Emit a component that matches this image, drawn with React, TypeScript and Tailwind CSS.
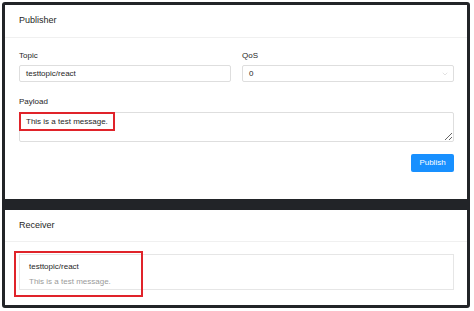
import { ChevronDown } from 'lucide-react';

const font = { fontFamily: '"Liberation Sans", Arial, sans-serif' };

const App = () => {
    return (
        <div className="relative w-[474px] h-[311px] bg-white text-[#262626]" style={font}>
            <div className="absolute left-[2px] top-[2px] w-[468px] h-[306px] border-[3px] border-[#222428] bg-[#222428] rounded-[3px] flex flex-col gap-[11px]">
                {/* Publisher */}
                <div className="h-[194px] bg-white flex flex-col">
                    <div className="h-[33px] flex items-center px-[14px] border-b border-[#f0f0f0] text-[9px] font-medium text-[#262626]">
                        Publisher
                    </div>
                    <div className="pl-[14px] pr-[13px] pt-[12px] flex flex-col">
                        <div className="grid grid-cols-2 gap-[11px]">
                            <div>
                                <div className="text-[8px] leading-[11px] mb-[4px]">Topic</div>
                                <div className="h-[17px] border border-[#dedede] rounded-[2px] flex items-center px-[6px] text-[8px]">
                                    testtopic/react
                                </div>
                            </div>
                            <div>
                                <div className="text-[8px] leading-[11px] mb-[4px]">QoS</div>
                                <div className="h-[17px] border border-[#dedede] rounded-[2px] flex items-center justify-between pl-[6px] pr-[4px] text-[8px]">
                                    <span>0</span>
                                    <ChevronDown size={8} strokeWidth={1.5} className="text-[#c4c4c4]" />
                                </div>
                            </div>
                        </div>
                        <div className="text-[8px] leading-[11px] mt-[14px] mb-[5px]">Payload</div>
                        <textarea
                            defaultValue="This is a test message."
                            className="h-[30px] w-full border border-[#dedede] rounded-[2px] px-[6px] py-[3px] text-[8px] leading-[11px] outline-none"
                            style={font}
                        />
                        <div className="flex justify-end mt-[12px]">
                            <button className="w-[43px] h-[18px] bg-[#1890ff] rounded-[2px] text-white text-[8px]">
                                Publish
                            </button>
                        </div>
                    </div>
                </div>

                {/* Receiver */}
                <div className="flex-1 bg-white flex flex-col">
                    <div className="h-[32px] flex items-center px-[14px] border-b border-[#f0f0f0] text-[9px] font-medium">
                        Receiver
                    </div>
                    <div className="pl-[14px] pr-[13px] pt-[12px]">
                        <div className="h-[36px] border border-[#e6e6e6] pl-[9px] pt-[6px] flex flex-col">
                            <div className="text-[8px] leading-[11px] font-medium">testtopic/react</div>
                            <div className="text-[8px] leading-[11px] mt-[4px] text-[#9a9a9a]">This is a test message.</div>
                        </div>
                    </div>
                </div>
            </div>

            {/* annotation boxes */}
            <div className="absolute left-[19px] top-[112px] w-[96px] h-[19px] border-2 border-[#e0232a]" />
            <div className="absolute left-[14px] top-[251px] w-[129px] h-[46px] border-2 border-[#e0232a]" />
        </div>
    );
};

export default App;
